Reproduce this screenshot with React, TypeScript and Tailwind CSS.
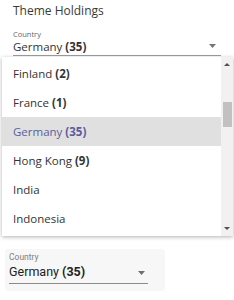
const countries = [
  { name: 'Finland', count: 2 },
  { name: 'France', count: 1 },
  { name: 'Germany', count: 35, selected: true },
  { name: 'Hong Kong', count: 9 },
  { name: 'India' },
  { name: 'Indonesia' },
];

function Caret({ className }: { className?: string }) {
  return (
    <svg width="7" height="4" viewBox="0 0 7 4" className={className}>
      <path d="M0 0 L7 0 L3.5 4 Z" fill="currentColor" />
    </svg>
  );
}

export default function App() {
  return (
    <div className="relative w-[234px] h-[300px] bg-white overflow-hidden font-['Open_Sans',sans-serif]">
      {/* top select */}
      <div className="px-[13px] pt-[3px]">
        <h2 className="h-[16px] leading-[16px] text-[12px] text-[#3a3a3a]">Theme Holdings</h2>
        <div className="mt-[10px] h-[10px] leading-[10px] text-[7.5px] text-[#666]">Country</div>
        <div className="w-[208px] h-[17px] flex items-center justify-between border-b border-[#9e9e9e] text-[11.5px] text-[#333]">
          <span>
            Germany <b>(35)</b>
          </span>
          <Caret className="mr-[5px] mb-[2px] text-[#777]" />
        </div>
      </div>

      {/* open menu */}
      <div className="absolute top-[57px] left-[2px] w-[231px] h-[179px] bg-white shadow-[0_1px_4px_rgba(0,0,0,0.3)] flex">
        <ul className="flex-1 pt-[2px] text-[11.5px] text-[#333]">
          {countries.map((c) => (
            <li
              key={c.name}
              className={
                c.selected
                  ? 'h-[29px] flex items-center pl-[11px] bg-[#e0e0e0] text-[#5c5c9c]'
                  : 'h-[29px] flex items-center pl-[11px]'
              }
            >
              <span>
                {c.name}
                {c.count !== undefined && <b> ({c.count})</b>}
              </span>
            </li>
          ))}
        </ul>
        <div className="w-[12px] bg-[#f1f1f1] flex flex-col items-center">
          <svg width="6" height="3" viewBox="0 0 6 3" className="mt-[6px] text-[#505050]">
            <path d="M0 3 L6 3 L3 0 Z" fill="currentColor" />
          </svg>
          <div className="mt-[36px] w-[9px] h-[25px] bg-[#c1c1c1]" />
          <div className="flex-1" />
          <svg width="6" height="3" viewBox="0 0 6 3" className="mb-[6px] text-[#505050]">
            <path d="M0 0 L6 0 L3 3 Z" fill="currentColor" />
          </svg>
        </div>
      </div>

      {/* second select */}
      <div className="mt-[193px] ml-[5px] w-[160px] h-[42px] bg-[#f7f7f7] rounded-[3px] pl-[4px] pt-[3px] font-['Roboto',sans-serif]">
        <div className="h-[10px] leading-[10px] text-[8.5px] text-[#808080]">Country</div>
        <div className="w-[139px] h-[22px] flex items-center justify-between border-b border-[#8a8a8a] text-[12.5px] text-[#222]">
          <span>
            Germany <b className="font-bold">(35)</b>
          </span>
          <Caret className="mr-[3px] text-[#707070]" />
        </div>
      </div>
    </div>
  );
}
